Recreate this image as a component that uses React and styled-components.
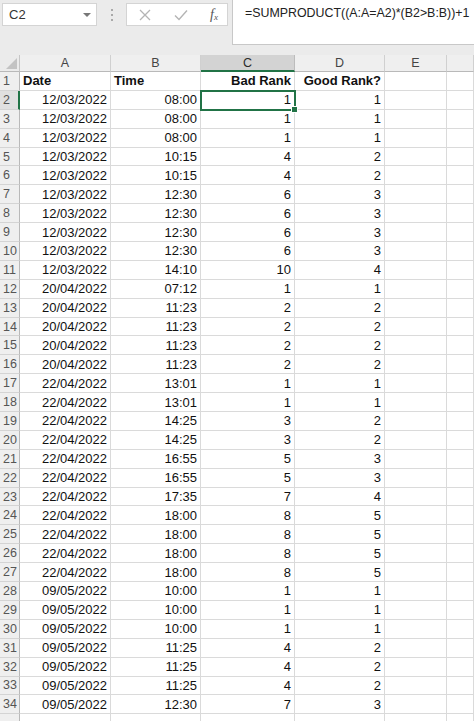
import React from "react";
import styled, { createGlobalStyle } from "styled-components";

const rows = [
  ["12/03/2022", "08:00", 1, 1],
  ["12/03/2022", "08:00", 1, 1],
  ["12/03/2022", "08:00", 1, 1],
  ["12/03/2022", "10:15", 4, 2],
  ["12/03/2022", "10:15", 4, 2],
  ["12/03/2022", "12:30", 6, 3],
  ["12/03/2022", "12:30", 6, 3],
  ["12/03/2022", "12:30", 6, 3],
  ["12/03/2022", "12:30", 6, 3],
  ["12/03/2022", "14:10", 10, 4],
  ["20/04/2022", "07:12", 1, 1],
  ["20/04/2022", "11:23", 2, 2],
  ["20/04/2022", "11:23", 2, 2],
  ["20/04/2022", "11:23", 2, 2],
  ["20/04/2022", "11:23", 2, 2],
  ["22/04/2022", "13:01", 1, 1],
  ["22/04/2022", "13:01", 1, 1],
  ["22/04/2022", "14:25", 3, 2],
  ["22/04/2022", "14:25", 3, 2],
  ["22/04/2022", "16:55", 5, 3],
  ["22/04/2022", "16:55", 5, 3],
  ["22/04/2022", "17:35", 7, 4],
  ["22/04/2022", "18:00", 8, 5],
  ["22/04/2022", "18:00", 8, 5],
  ["22/04/2022", "18:00", 8, 5],
  ["22/04/2022", "18:00", 8, 5],
  ["09/05/2022", "10:00", 1, 1],
  ["09/05/2022", "10:00", 1, 1],
  ["09/05/2022", "10:00", 1, 1],
  ["09/05/2022", "11:25", 4, 2],
  ["09/05/2022", "11:25", 4, 2],
  ["09/05/2022", "11:25", 4, 2],
  ["09/05/2022", "12:30", 7, 3],
];

const columns = ["A", "B", "C", "D", "E", ""];

const GlobalStyle = createGlobalStyle`
  html, body {
    margin: 0;
    padding: 0;
    background: #ffffff;
    overflow: hidden;
  }
  body {
    font-family: "Liberation Sans", Arial, sans-serif;
  }
`;

const Page = styled.div`
  width: 474px;
  height: 721px;
  overflow: hidden;
  background: #ffffff;
`;

const TopBar = styled.div`
  height: 55px;
  background: #ebebeb;
  display: flex;
  align-items: flex-start;
`;

const NameBox = styled.div`
  flex: none;
  margin: 3px 0 0 2px;
  width: 95px;
  height: 23px;
  box-sizing: border-box;
  background: #ffffff;
  border: 1px solid #d4d4d4;
  display: flex;
  align-items: center;
  justify-content: space-between;
  padding: 0 5px 0 6px;
  font-size: 13px;
  color: #333;
`;

const Caret = styled.span`
  width: 0;
  height: 0;
  border-left: 4px solid transparent;
  border-right: 4px solid transparent;
  border-top: 4px solid #777;
`;

const Dots = styled.div`
  flex: none;
  width: 29px;
  height: 29px;
  display: flex;
  flex-direction: column;
  align-items: center;
  justify-content: center;
  gap: 3px;
  span {
    width: 2px;
    height: 2px;
    background: #a9a9a9;
  }
`;

const FxButtons = styled.div`
  flex: none;
  margin-top: 3px;
  width: 102px;
  height: 23px;
  box-sizing: border-box;
  background: #ffffff;
  border: 1px solid #d4d4d4;
  display: flex;
  align-items: center;
  justify-content: space-between;
  padding: 0 9px 0 12px;
`;

const Fx = styled.span`
  font-family: "Liberation Serif", "Times New Roman", serif;
  font-style: italic;
  font-size: 14px;
  color: #555;
  sub {
    font-size: 9px;
    vertical-align: -1px;
  }
`;

const FormulaBox = styled.div`
  margin-left: 4px;
  flex: 1;
  height: 45px;
  box-sizing: border-box;
  background: #ffffff;
  border: 1px solid #c8c8c8;
  border-top: none;
  border-right: none;
  padding: 6px 0 0 12px;
  font-size: 12.4px;
  color: #222;
  white-space: nowrap;
`;

const Sheet = styled.div`
  display: grid;
  grid-template-columns: 20px 91px 90px 94px 90px 62px 1fr;
  grid-template-rows: 17px;
  grid-auto-rows: 18.9px;
  font-size: 13px;
  color: #111;
`;

const Corner = styled.div`
  position: relative;
  background: #ebebeb;
  border-right: 1px solid #c6c6c6;
  border-bottom: 1px solid #b9b9b9;
  box-sizing: border-box;
  &::after {
    content: "";
    position: absolute;
    right: 2px;
    bottom: 2px;
    width: 0;
    height: 0;
    border-left: 11px solid transparent;
    border-bottom: 11px solid #c3c3c3;
  }
`;

const ColHead = styled.div`
  background: ${(p) => (p.$active ? "#d3d3d3" : "#efefef")};
  border-right: 1px solid ${(p) => (p.$active ? "#bcbcbc" : "#d0d0d0")};
  border-bottom: ${(p) => (p.$active ? "2px solid #217346" : "1px solid #b9b9b9")};
  box-sizing: border-box;
  display: flex;
  align-items: center;
  justify-content: center;
  font-size: 12.5px;
  color: ${(p) => (p.$active ? "#2b2b2b" : "#444")};
`;

const RowHead = styled.div`
  background: ${(p) => (p.$active ? "#e0e0e0" : "#efefef")};
  border-right: ${(p) => (p.$active ? "2px solid #217346" : "1px solid #b9b9b9")};
  border-bottom: 1px solid #d4d4d4;
  box-sizing: border-box;
  display: flex;
  align-items: center;
  justify-content: flex-start;
  padding-left: 3px;
  font-size: 12.5px;
  color: #555;
`;

const Cell = styled.div`
  position: relative;
  border-right: 1px solid #dadada;
  border-bottom: 1px solid #dadada;
  box-sizing: border-box;
  display: flex;
  align-items: center;
  justify-content: ${(p) => (p.$right ? "flex-end" : "flex-start")};
  padding: 0 3px;
  font-weight: ${(p) => (p.$bold ? 700 : 400)};
  white-space: nowrap;
  ${(p) =>
    p.$selected &&
    `
    outline: 2px solid #217346;
    outline-offset: -1px;
    z-index: 1;
  `}
`;

const Handle = styled.span`
  position: absolute;
  right: -4px;
  bottom: -4px;
  width: 5px;
  height: 5px;
  background: #217346;
  border: 1px solid #ffffff;
`;

const App = () => {
  return (
    <Page>
      <GlobalStyle />
      <TopBar>
        <NameBox>
          C2
          <Caret />
        </NameBox>
        <Dots>
          <span />
          <span />
          <span />
        </Dots>
        <FxButtons>
          <svg width="12" height="12" viewBox="0 0 12 12">
            <path d="M1 1L11 11M11 1L1 11" stroke="#b4b4b4" strokeWidth="1.3" fill="none" />
          </svg>
          <svg width="14" height="12" viewBox="0 0 14 12">
            <path d="M1 6.5L5 10.5L13 1.5" stroke="#b4b4b4" strokeWidth="1.4" fill="none" />
          </svg>
          <Fx>
            f<sub>x</sub>
          </Fx>
        </FxButtons>
        <FormulaBox>=SUMPRODUCT((A:A=A2)*(B2&gt;B:B))+1</FormulaBox>
      </TopBar>
      <Sheet>
        <Corner />
        {columns.map((c) => (
          <ColHead key={c || "F"} $active={c === "C"}>
            {c}
          </ColHead>
        ))}

        <RowHead>1</RowHead>
        <Cell $bold>Date</Cell>
        <Cell $bold>Time</Cell>
        <Cell $bold $right>Bad Rank</Cell>
        <Cell $bold $right>Good Rank?</Cell>
        <Cell />
        <Cell />

        {rows.map((r, i) => (
          <React.Fragment key={i}>
            <RowHead $active={i === 0}>{i + 2}</RowHead>
            <Cell $right>{r[0]}</Cell>
            <Cell $right>{r[1]}</Cell>
            <Cell $right $selected={i === 0}>
              {r[2]}
              {i === 0 && <Handle />}
            </Cell>
            <Cell $right>{r[3]}</Cell>
            <Cell />
            <Cell />
          </React.Fragment>
        ))}

        <RowHead />
        <Cell />
        <Cell />
        <Cell />
        <Cell />
        <Cell />
        <Cell />
      </Sheet>
    </Page>
  );
};

export default App;
